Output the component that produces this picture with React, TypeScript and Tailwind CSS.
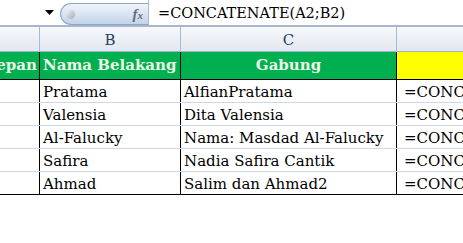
import React from 'react';

const rows = [
  { b: 'Pratama', c: 'AlfianPratama' },
  { b: 'Valensia', c: 'Dita Valensia' },
  { b: 'Al-Falucky', c: 'Nama: Masdad Al-Falucky' },
  { b: 'Safira', c: 'Nadia Safira Cantik' },
  { b: 'Ahmad', c: 'Salim dan Ahmad2' },
];

const serif = { fontFamily: '"DejaVu Serif", "Liberation Serif", serif' };

export default function App() {
  return (
    <div className="w-[463px] h-[243px] overflow-hidden bg-white text-black" style={serif}>
      {/* formula bar */}
      <div className="flex h-[25px] bg-white">
        <div className="w-[60px] flex items-center justify-end pr-[6px]">
          <svg width="9" height="5" viewBox="0 0 9 5">
            <path d="M0 0 L9 0 L4.5 5 Z" fill="#000" />
          </svg>
        </div>
        <div className="w-[88px] mt-[3px] h-[22px] rounded-l-[11px] border border-r-0 border-[#8fa4c0] bg-gradient-to-b from-[#f0f5fb] to-[#c3d3ea] flex items-center justify-between pl-[5px] pr-[5px]">
          <div className="w-[9px] h-[9px] rounded-full bg-gradient-to-br from-[#f4f6f9] to-[#a0a8b3]" />
          <span className="italic font-bold text-[15px] text-[#656c78] leading-none" style={{ fontFamily: '"Liberation Serif", serif' }}>
            f<span className="text-[11px]">x</span>
          </span>
        </div>
        <div className="flex-1 border-l border-[#a9bad0] flex items-center pl-[9px] pt-[1px] text-[14.5px] leading-none">
          =CONCATENATE(A2;B2)
        </div>
      </div>
      <div className="h-[2px] bg-[#a7b8cd]" />

      {/* column headers */}
      <div className="grid grid-cols-[39px_141px_216px_1fr] h-[25px] bg-gradient-to-b from-[#f7f9fc] to-[#e2e8f0] border-b border-[#9fb3c9] text-[15px] text-[#27415b]">
        <div />
        <div className="border-l border-[#a6bad0] flex items-center justify-center pt-[2px]">B</div>
        <div className="border-l border-[#a6bad0] flex items-center justify-center pt-[2px]">C</div>
        <div className="border-l border-[#a6bad0]" />
      </div>

      {/* header row */}
      <div className="grid grid-cols-[39px_141px_216px_1fr] h-[28px] border-b border-black text-[15px] font-bold text-[#eef5e4]">
        <div className="bg-[#00b050] flex items-center justify-end overflow-hidden whitespace-nowrap pr-[2px]">
          <span>Nama Depan</span>
        </div>
        <div className="bg-[#00b050] border-l border-black flex items-center pl-[3px] whitespace-nowrap overflow-hidden">
          Nama Belakang
        </div>
        <div className="bg-[#00b050] border-l border-black flex items-center justify-center">Gabung</div>
        <div className="bg-[#ffff00] border-l border-black" />
      </div>

      {/* data rows */}
      {rows.map((r, i) => (
        <div
          key={i}
          className={`grid grid-cols-[39px_141px_216px_1fr] h-[23px] text-[15px] ${
            i === rows.length - 1 ? 'border-b border-black' : 'border-b border-[#d0d7e5]'
          }`}
        >
          <div />
          <div className="border-l border-black flex items-center pl-[3px] pt-[3px] whitespace-nowrap overflow-hidden">{r.b}</div>
          <div className="border-l border-black flex items-center pl-[3px] pt-[3px] whitespace-nowrap overflow-hidden">{r.c}</div>
          <div className="border-l border-black flex items-center pl-[7px] pt-[3px] whitespace-nowrap overflow-hidden">
            =CONCATENATE(A{i + 2};B{i + 2})
          </div>
        </div>
      ))}
    </div>
  );
}
